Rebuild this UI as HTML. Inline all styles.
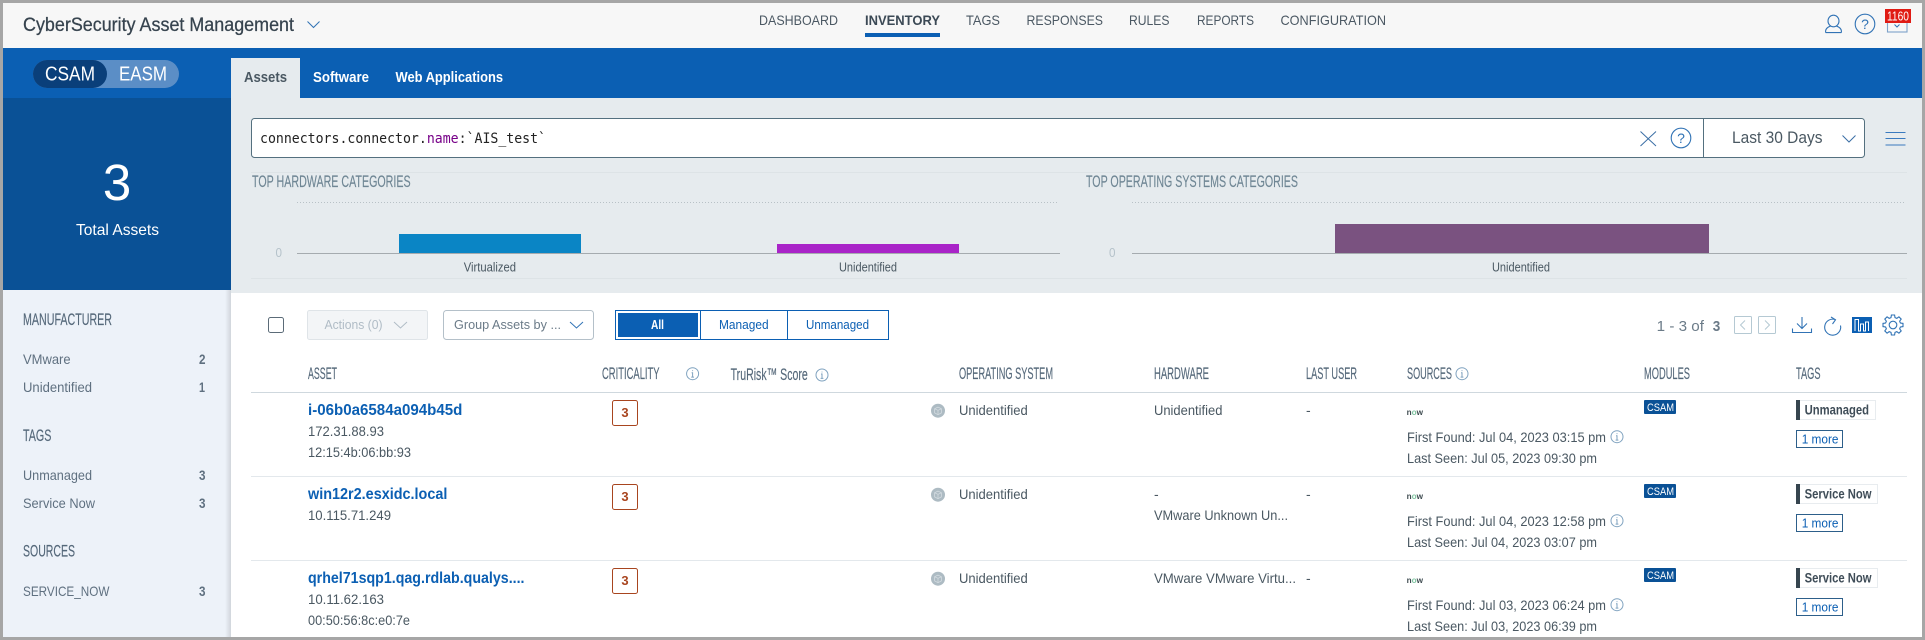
<!DOCTYPE html>
<html lang="en">
<head>
<meta charset="utf-8">
<title>CyberSecurity Asset Management</title>
<style>
html,body{margin:0;padding:0;background:#a6a6a6;width:1925px;height:640px;overflow:hidden}
svg{display:block}
text{font-family:"Liberation Sans",Arial,sans-serif;white-space:pre}
.nav{font-size:14px;fill:#4b5863}
.h{font-size:17px;fill:#55687a;stroke:#55687a;stroke-width:.15}
.side{font-size:14px;fill:#5f7080}
.cnt{font-size:14px;font-weight:700;fill:#5f7080}
.c{font-size:14px;fill:#4a5862}
.n{font-size:16px;font-weight:700;fill:#0b5fb3}
.cr{font-size:13px;font-weight:700;fill:#a8451f}
.lb{font-size:12.5px;fill:#4a5862}
.z{font-size:13px;fill:#b5c2ca}
.tg{font-size:13.5px;font-weight:700;fill:#3f4d58}
.mr{font-size:13px;fill:#0b5fb3}
.cs{font-size:11px;fill:#fff}
.ic{fill:none;stroke:#3173b5;stroke-width:1.1}
.inf{fill:none;stroke:#7fa2bf;stroke-width:1}
.chev{fill:none;stroke-width:1}
</style>
</head>
<body>
<svg width="1925" height="640" viewBox="0 0 1925 640" xmlns="http://www.w3.org/2000/svg">
<defs>
<linearGradient id="sh" x1="0" x2="1" y1="0" y2="0"><stop offset="0" stop-color="#000" stop-opacity="0"/><stop offset="1" stop-color="#000" stop-opacity=".12"/></linearGradient>
<g id="info" class="inf"><circle cx="0" cy="0" r="6"/><path d="M-1 -1H0V3.4M-1.4 3.4H1.4M0 -3.4V-2.6"/></g>
<g id="os"><circle cx="0" cy="0" r="7" fill="#adbbc3"/><path d="M0 -3.6L3.4 -2V2.2L0 4L-3.4 2.2V-2ZM-3.4 -2L0 -.4L3.4 -2M0 -.4V4" fill="none" stroke="#d3dbe0" stroke-width=".8"/></g>
</defs>

<!-- frame + page -->
<rect x="0" y="0" width="1925" height="640" fill="#a6a6a6"/>
<rect x="3" y="3" width="1919" height="634" fill="#fff"/>

<!-- header -->
<rect x="3" y="3" width="1919" height="45" fill="#f7f7f7"/>
<text x="23" y="31" font-size="19" fill="#36434e" stroke="#36434e" stroke-width=".25" textLength="271" lengthAdjust="spacingAndGlyphs">CyberSecurity Asset Management</text>
<path class="chev" stroke="#3173b5" d="M307.500 21.500L313.500 27.500L319.500 21.500"/>
<text class="nav" x="759" y="25" textLength="79" lengthAdjust="spacingAndGlyphs">DASHBOARD</text>
<text class="nav" x="865" y="25" font-weight="700" style="fill:#3b4955" textLength="75" lengthAdjust="spacingAndGlyphs">INVENTORY</text>
<rect x="865" y="33" width="75" height="4" fill="#0b5fb3"/>
<text class="nav" x="966" y="25" textLength="34" lengthAdjust="spacingAndGlyphs">TAGS</text>
<text class="nav" x="1026.500" y="25" textLength="76.500" lengthAdjust="spacingAndGlyphs">RESPONSES</text>
<text class="nav" x="1129" y="25" textLength="40.500" lengthAdjust="spacingAndGlyphs">RULES</text>
<text class="nav" x="1197" y="25" textLength="57" lengthAdjust="spacingAndGlyphs">REPORTS</text>
<text class="nav" x="1280.500" y="25" textLength="105.500" lengthAdjust="spacingAndGlyphs">CONFIGURATION</text>

<ellipse class="ic" cx="1833.500" cy="21" rx="5.500" ry="5.800"/>
<path class="ic" d="M1825.600 32.600v-1.200c0-2.800 2.600-4.700 4.800-5.200M1841.400 32.600v-1.200c0-2.800-2.600-4.700-4.800-5.200M1825.600 32.600H1841.400"/>
<circle class="ic" cx="1865" cy="24" r="9.800"/>
<text x="1865" y="29" font-size="14" text-anchor="middle" fill="#3173b5">?</text>
<rect x="1887.500" y="20" width="19.500" height="12" fill="none" stroke="#7fa3ca" stroke-width="1.100"/>
<path d="M1894.500 24.500L1897 27L1899.500 24.500" fill="none" stroke="#3173b5"/>
<rect x="1885" y="9" width="26" height="14" fill="#e01b14"/>
<text x="1887" y="20.500" font-size="13" fill="#fff" textLength="22" lengthAdjust="spacingAndGlyphs">1160</text>

<!-- blue band -->
<rect x="3" y="48" width="1919" height="50" fill="#0b5fb3"/>
<rect x="33" y="60" width="146" height="28" rx="14" fill="#5b8ec6"/>
<rect x="33" y="60" width="74" height="28" rx="14" fill="#0a3f7a"/>
<text x="45" y="80.500" font-size="20" fill="#fff" textLength="50" lengthAdjust="spacingAndGlyphs">CSAM</text>
<text x="119" y="80.500" font-size="20" fill="#fff" textLength="48" lengthAdjust="spacingAndGlyphs">EASM</text>

<!-- content background -->
<rect x="231" y="98" width="1691" height="195" fill="#e6ebee"/>
<rect x="231" y="58" width="69" height="40" fill="#e6ebee"/>
<text x="244" y="82" font-size="14.500" font-weight="700" fill="#4a5862" textLength="43" lengthAdjust="spacingAndGlyphs">Assets</text>
<text x="313" y="82" font-size="14.500" font-weight="700" fill="#fff" textLength="56" lengthAdjust="spacingAndGlyphs">Software</text>
<text x="395.500" y="82" font-size="14.500" font-weight="700" fill="#fff" textLength="107.500" lengthAdjust="spacingAndGlyphs">Web Applications</text>

<!-- stat panel -->
<rect x="3" y="98" width="228" height="192" fill="#0a5196"/>
<text x="117" y="200" font-size="51" text-anchor="middle" fill="#fff">3</text>
<text x="76" y="235" font-size="16" fill="#fff" textLength="83" lengthAdjust="spacingAndGlyphs">Total Assets</text>

<!-- search -->
<rect x="251.500" y="118.500" width="1613" height="39" rx="3" fill="#fff" stroke="#54707f"/>
<text x="260" y="143" font-size="14" fill="#222" style="font-family:'DejaVu Sans Mono','Liberation Mono',monospace" textLength="286" lengthAdjust="spacingAndGlyphs">connectors.connector.<tspan fill="#770088">name</tspan>:`AIS_test`</text>
<path d="M1640.500 131.500L1656 146M1656 131.500L1640.500 146" fill="none" stroke="#3a6ea5" stroke-width="1"/>
<circle class="ic" cx="1681" cy="138" r="9.800"/>
<text x="1681" y="143" font-size="14" text-anchor="middle" fill="#3173b5">?</text>
<path d="M1703.500 118V158" stroke="#54707f"/>
<text x="1732" y="143" font-size="16.500" fill="#4a5862" textLength="90.500" lengthAdjust="spacingAndGlyphs">Last 30 Days</text>
<path class="chev" stroke="#3a6ea5" d="M1842.500 135.500L1849 142L1855.500 135.500"/>
<path d="M1885.500 132.500H1905.500M1885.500 138.500H1905.500M1885.500 145H1905.500" stroke="#3a7abf" stroke-width="1" fill="none"/>

<!-- charts -->
<path d="M251 172.500H1907M251 278.500H1907" stroke="#dde3e6" fill="none"/>
<text x="252" y="187" class="h" style="fill:#6f8694;stroke:#6f8694" textLength="158.600" lengthAdjust="spacingAndGlyphs">TOP HARDWARE CATEGORIES</text>
<text x="1086" y="187" class="h" style="fill:#6f8694;stroke:#6f8694" textLength="212" lengthAdjust="spacingAndGlyphs">TOP OPERATING SYSTEMS CATEGORIES</text>
<path d="M297 202.500H1058M1132 202.500H1905" stroke="#b8c1c6" stroke-dasharray="1 2" fill="none"/>
<rect x="399" y="234" width="182" height="19" fill="#0a85c5"/>
<rect x="777" y="244" width="182" height="9" fill="#a924c8"/>
<rect x="1335" y="224" width="374" height="29" fill="#7a5280"/>
<path d="M297 253.500H1060M1132 253.500H1907" stroke="#a5abaf" fill="none"/>
<text class="z" x="275.500" y="257" textLength="6.500" lengthAdjust="spacingAndGlyphs">0</text>
<text class="z" x="1109" y="257" textLength="6.500" lengthAdjust="spacingAndGlyphs">0</text>
<text class="lb" x="463.700" y="271.500" textLength="52.300" lengthAdjust="spacingAndGlyphs">Virtualized</text>
<text class="lb" x="839" y="271.500" textLength="58" lengthAdjust="spacingAndGlyphs">Unidentified</text>
<text class="lb" x="1492" y="271.500" textLength="58" lengthAdjust="spacingAndGlyphs">Unidentified</text>

<!-- sidebar -->
<rect x="3" y="290" width="228" height="347" fill="#edf2f9"/>
<rect x="225" y="290" width="6" height="347" fill="url(#sh)"/>
<text class="h" x="23" y="325" textLength="89" lengthAdjust="spacingAndGlyphs">MANUFACTURER</text>
<text class="side" x="23" y="364" textLength="47.600" lengthAdjust="spacingAndGlyphs">VMware</text>
<text class="cnt" x="199" y="364" textLength="6.500" lengthAdjust="spacingAndGlyphs">2</text>
<text class="side" x="23" y="392" textLength="69" lengthAdjust="spacingAndGlyphs">Unidentified</text>
<text class="cnt" x="199" y="392" textLength="6" lengthAdjust="spacingAndGlyphs">1</text>
<text class="h" x="23" y="441" textLength="28.400" lengthAdjust="spacingAndGlyphs">TAGS</text>
<text class="side" x="23" y="480" textLength="69" lengthAdjust="spacingAndGlyphs">Unmanaged</text>
<text class="cnt" x="199" y="480" textLength="6.500" lengthAdjust="spacingAndGlyphs">3</text>
<text class="side" x="23" y="508" textLength="72" lengthAdjust="spacingAndGlyphs">Service Now</text>
<text class="cnt" x="199" y="508" textLength="6.500" lengthAdjust="spacingAndGlyphs">3</text>
<text class="h" x="23" y="556.500" textLength="52" lengthAdjust="spacingAndGlyphs">SOURCES</text>
<text class="side" x="23" y="596" textLength="86.400" lengthAdjust="spacingAndGlyphs">SERVICE_NOW</text>
<text class="cnt" x="199" y="596" textLength="6.500" lengthAdjust="spacingAndGlyphs">3</text>

<!-- toolbar -->
<rect x="268.500" y="317.500" width="15" height="15" rx="2" fill="#fff" stroke="#5b6b78"/>
<rect x="307.500" y="310.500" width="120" height="29" rx="2" fill="#f3f5f7" stroke="#dfe4e8"/>
<text x="324.500" y="329" font-size="13" fill="#b0bcc6" textLength="58" lengthAdjust="spacingAndGlyphs">Actions (0)</text>
<path class="chev" stroke="#b0bcc6" d="M394 322L400.500 328L407 322"/>
<rect x="443.500" y="310.500" width="150" height="29" rx="3" fill="#fff" stroke="#b4c0c9"/>
<text x="454" y="329" font-size="13" fill="#6b7b88" textLength="107" lengthAdjust="spacingAndGlyphs">Group Assets by ...</text>
<path class="chev" stroke="#3173b5" d="M570 322L576.500 328L583 322"/>
<rect x="615.500" y="310.500" width="273" height="29" fill="#fff" stroke="#0b5fb3"/>
<rect x="618" y="313" width="80" height="24" fill="#0b5fb3"/>
<path d="M700.500 310V340M787.500 310V340" stroke="#0b5fb3"/>
<text x="651" y="329" font-size="13" font-weight="700" fill="#fff" textLength="13" lengthAdjust="spacingAndGlyphs">All</text>
<text x="719" y="329" font-size="13" fill="#0b5fb3" textLength="49.600" lengthAdjust="spacingAndGlyphs">Managed</text>
<text x="806" y="329" font-size="13" fill="#0b5fb3" textLength="63" lengthAdjust="spacingAndGlyphs">Unmanaged</text>

<text x="1656.700" y="331" font-size="15" fill="#6b7b88" textLength="47.300" lengthAdjust="spacingAndGlyphs">1 - 3 of</text>
<text x="1712.700" y="331" font-size="15" font-weight="700" fill="#6b7b88" textLength="7.500" lengthAdjust="spacingAndGlyphs">3</text>
<rect x="1734.500" y="316.500" width="17" height="17" rx="1" fill="#fff" stroke="#b5c9d3"/>
<rect x="1758.500" y="316.500" width="17" height="17" rx="1" fill="#fff" stroke="#b5c9d3"/>
<path d="M1745 320.500L1740.500 325L1745 329.500M1765 320.500L1769.500 325L1765 329.500" fill="none" stroke="#b5c9d3"/>
<path class="ic" d="M1792.500 328.500V332.500H1811.500V328.500M1802 317V328M1797 323.500L1802 328.500L1807 323.500"/>
<path class="ic" d="M1835 319.500A8 8 0 1 0 1840.500 325.500M1831 317L1835.500 319.800L1832.500 324"/>
<rect x="1852" y="317" width="20" height="16" fill="#0b5fb3"/>
<path d="M1855 331V319.500H1858.500V331H1860.500V324H1863.500V331H1865.500V322H1868.500V331" fill="none" stroke="#fff"/>
<g transform="translate(1893,325)"><path class="ic" d="M-2-7.400L-1.600-10H1.600L2-7.400L3.820-6.650L5.940-8.200L8.200-5.940L6.650-3.820L7.400-2L10-1.600V1.600L7.400 2L6.650 3.820L8.200 5.940L5.940 8.200L3.820 6.650L2 7.400L1.600 10H-1.600L-2 7.400L-3.820 6.650L-5.940 8.200L-8.200 5.940L-6.650 3.820L-7.400 2L-10 1.600V-1.600L-7.400-2L-6.650-3.820L-8.200-5.940L-5.940-8.200L-3.820-6.650Z"/><circle class="ic" r="3.800"/></g>

<!-- table head -->
<text class="h" x="308" y="379" textLength="29" lengthAdjust="spacingAndGlyphs">ASSET</text>
<text class="h" x="602" y="379" textLength="57.600" lengthAdjust="spacingAndGlyphs">CRITICALITY</text>
<use href="#info" x="692.600" y="373.700"/>
<text class="h" x="730.600" y="380" textLength="77.200" lengthAdjust="spacingAndGlyphs">TruRisk™ Score</text>
<use href="#info" x="822" y="375"/>
<text class="h" x="959" y="379" textLength="94" lengthAdjust="spacingAndGlyphs">OPERATING SYSTEM</text>
<text class="h" x="1154" y="379" textLength="55" lengthAdjust="spacingAndGlyphs">HARDWARE</text>
<text class="h" x="1306" y="379" textLength="51" lengthAdjust="spacingAndGlyphs">LAST USER</text>
<text class="h" x="1407" y="379" textLength="45" lengthAdjust="spacingAndGlyphs">SOURCES</text>
<use href="#info" x="1462" y="373.700"/>
<text class="h" x="1644" y="379" textLength="46" lengthAdjust="spacingAndGlyphs">MODULES</text>
<text class="h" x="1796" y="379" textLength="24.500" lengthAdjust="spacingAndGlyphs">TAGS</text>
<path d="M251 392.500H1907" stroke="#cfd8de" fill="none"/>
<path d="M251 476.500H1907M251 560.500H1907" stroke="#e3e8ec" fill="none"/>

<!-- row 1 -->
<text class="n" x="308" y="415" textLength="154.400" lengthAdjust="spacingAndGlyphs">i-06b0a6584a094b45d</text>
<text class="c" x="308" y="436" textLength="76" lengthAdjust="spacingAndGlyphs">172.31.88.93</text>
<text class="c" x="308" y="457" textLength="103" lengthAdjust="spacingAndGlyphs">12:15:4b:06:bb:93</text>
<rect x="612.500" y="400.500" width="25" height="25" rx="2" fill="#fff" stroke="#a8451f"/>
<text class="cr" x="625" y="417" text-anchor="middle">3</text>
<use href="#os" x="938" y="410.700"/>
<text class="c" x="959" y="415" textLength="68.800" lengthAdjust="spacingAndGlyphs">Unidentified</text>
<text class="c" x="1154" y="415" textLength="68.400" lengthAdjust="spacingAndGlyphs">Unidentified</text>
<text class="c" x="1306" y="415">-</text>
<text x="1406.600" y="415" font-size="8" font-weight="700" fill="#3d4a4f" textLength="16.400" lengthAdjust="spacingAndGlyphs">n<tspan fill="#7fc4a0">o</tspan>w</text>
<text class="c" x="1407" y="442" textLength="199" lengthAdjust="spacingAndGlyphs">First Found: Jul 04, 2023 03:15 pm</text>
<use href="#info" x="1617" y="436.700"/>
<text class="c" x="1407" y="463" textLength="190" lengthAdjust="spacingAndGlyphs">Last Seen: Jul 05, 2023 09:30 pm</text>
<rect x="1644" y="400" width="32" height="14" rx="1" fill="#0a5196"/>
<text class="cs" x="1647" y="411" textLength="27" lengthAdjust="spacingAndGlyphs">CSAM</text>
<rect x="1796.500" y="400.500" width="79" height="19" fill="#fff" stroke="#e8ecef"/>
<rect x="1796" y="400" width="4" height="20" fill="#36454f"/>
<text class="tg" x="1804.600" y="414.500" textLength="64.400" lengthAdjust="spacingAndGlyphs">Unmanaged</text>
<rect x="1796.500" y="430.500" width="46" height="17" fill="#fff" stroke="#2d5f8a"/>
<text class="mr" x="1801.700" y="443.300" textLength="36.800" lengthAdjust="spacingAndGlyphs">1 more</text>

<!-- row 2 -->
<text class="n" x="308" y="499" textLength="139.400" lengthAdjust="spacingAndGlyphs">win12r2.esxidc.local</text>
<text class="c" x="308" y="520" textLength="83" lengthAdjust="spacingAndGlyphs">10.115.71.249</text>
<rect x="612.500" y="484.500" width="25" height="25" rx="2" fill="#fff" stroke="#a8451f"/>
<text class="cr" x="625" y="501" text-anchor="middle">3</text>
<use href="#os" x="938" y="494.700"/>
<text class="c" x="959" y="499" textLength="68.800" lengthAdjust="spacingAndGlyphs">Unidentified</text>
<text class="c" x="1154" y="499">-</text>
<text class="c" x="1154" y="520" textLength="134" lengthAdjust="spacingAndGlyphs">VMware Unknown Un...</text>
<text class="c" x="1306" y="499">-</text>
<text x="1406.600" y="499" font-size="8" font-weight="700" fill="#3d4a4f" textLength="16.400" lengthAdjust="spacingAndGlyphs">n<tspan fill="#7fc4a0">o</tspan>w</text>
<text class="c" x="1407" y="526" textLength="199" lengthAdjust="spacingAndGlyphs">First Found: Jul 04, 2023 12:58 pm</text>
<use href="#info" x="1617" y="520.700"/>
<text class="c" x="1407" y="547" textLength="190" lengthAdjust="spacingAndGlyphs">Last Seen: Jul 04, 2023 03:07 pm</text>
<rect x="1644" y="484" width="32" height="14" rx="1" fill="#0a5196"/>
<text class="cs" x="1647" y="495" textLength="27" lengthAdjust="spacingAndGlyphs">CSAM</text>
<rect x="1796.500" y="484.500" width="81" height="19" fill="#fff" stroke="#e8ecef"/>
<rect x="1796" y="484" width="4" height="20" fill="#36454f"/>
<text class="tg" x="1804.600" y="498.500" textLength="66.900" lengthAdjust="spacingAndGlyphs">Service Now</text>
<rect x="1796.500" y="514.500" width="46" height="17" fill="#fff" stroke="#2d5f8a"/>
<text class="mr" x="1801.700" y="527.300" textLength="36.800" lengthAdjust="spacingAndGlyphs">1 more</text>

<!-- row 3 -->
<text class="n" x="308" y="583" textLength="216.500" lengthAdjust="spacingAndGlyphs">qrhel71sqp1.qag.rdlab.qualys....</text>
<text class="c" x="308" y="604" textLength="76" lengthAdjust="spacingAndGlyphs">10.11.62.163</text>
<text class="c" x="308" y="625" textLength="102" lengthAdjust="spacingAndGlyphs">00:50:56:8c:e0:7e</text>
<rect x="612.500" y="568.500" width="25" height="25" rx="2" fill="#fff" stroke="#a8451f"/>
<text class="cr" x="625" y="585" text-anchor="middle">3</text>
<use href="#os" x="938" y="578.700"/>
<text class="c" x="959" y="583" textLength="68.800" lengthAdjust="spacingAndGlyphs">Unidentified</text>
<text class="c" x="1154" y="583" textLength="142" lengthAdjust="spacingAndGlyphs">VMware VMware Virtu...</text>
<text class="c" x="1306" y="583">-</text>
<text x="1406.600" y="583" font-size="8" font-weight="700" fill="#3d4a4f" textLength="16.400" lengthAdjust="spacingAndGlyphs">n<tspan fill="#7fc4a0">o</tspan>w</text>
<text class="c" x="1407" y="610" textLength="199" lengthAdjust="spacingAndGlyphs">First Found: Jul 03, 2023 06:24 pm</text>
<use href="#info" x="1617" y="604.700"/>
<text class="c" x="1407" y="631" textLength="190" lengthAdjust="spacingAndGlyphs">Last Seen: Jul 03, 2023 06:39 pm</text>
<rect x="1644" y="568" width="32" height="14" rx="1" fill="#0a5196"/>
<text class="cs" x="1647" y="579" textLength="27" lengthAdjust="spacingAndGlyphs">CSAM</text>
<rect x="1796.500" y="568.500" width="81" height="19" fill="#fff" stroke="#e8ecef"/>
<rect x="1796" y="568" width="4" height="20" fill="#36454f"/>
<text class="tg" x="1804.600" y="582.500" textLength="66.900" lengthAdjust="spacingAndGlyphs">Service Now</text>
<rect x="1796.500" y="598.500" width="46" height="17" fill="#fff" stroke="#2d5f8a"/>
<text class="mr" x="1801.700" y="611.300" textLength="36.800" lengthAdjust="spacingAndGlyphs">1 more</text>

<!-- bottom frame over clipped row -->
<rect x="0" y="637" width="1925" height="3" fill="#a6a6a6"/>
<rect x="1922" y="0" width="3" height="640" fill="#a6a6a6"/>
</svg>
</body>
</html>
